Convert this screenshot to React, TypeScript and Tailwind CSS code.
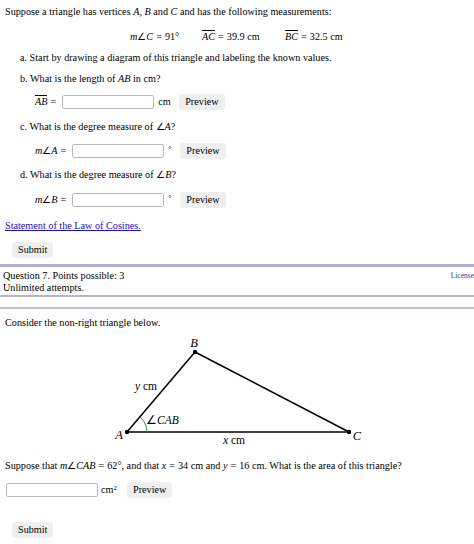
import React from 'react';

function M({ children }: { children: React.ReactNode }) {
  return <span className="italic">{children}</span>;
}

function Bar({ children }: { children: React.ReactNode }) {
  return <span className="inline-block border-t border-black pt-[1px] leading-[1] italic">{children}</span>;
}

function Eq() {
  return <span className="mx-[3px]">=</span>;
}

function Input() {
  return <span className="inline-block h-[14px] w-[92px] rounded-[2px] border border-[#b8b8b8] bg-white" />;
}

function Btn({ children }: { children: React.ReactNode }) {
  return (
    <span className="inline-flex h-[16px] items-center rounded-[3px] bg-[#efefef] px-[6px] text-[10.2px]">
      {children}
    </span>
  );
}

function AnswerRow({ label, unit, unitW }: { label: React.ReactNode; unit: React.ReactNode; unitW: string }) {
  return (
    <div className="flex h-[17px] items-center pl-[30px]">
      <span className="mr-[3px]">{label}</span>
      <Input />
      <span className={`pl-[4px] ${unitW}`}>{unit}</span>
      <Btn>Preview</Btn>
    </div>
  );
}

export default function App() {
  return (
    <div className="h-[544px] w-[474px] overflow-hidden bg-white text-[10.2px] leading-[14px] text-black [font-family:'Liberation_Serif','Times_New_Roman',serif]">
      <div className="px-[5px] pt-[5px]">
        <p>
          Suppose a triangle has vertices <M>A</M>, <M>B</M> and <M>C</M> and has the following measurements:
        </p>
        <div className="mt-[11px] flex pl-[125px]">
          <span className="w-[72px]">
            <M>m</M>∠<M>C</M>
            <Eq />
            91°
          </span>
          <span className="w-[83px]">
            <Bar>AC</Bar>
            <Eq />
            39.9 cm
          </span>
          <span>
            <Bar>BC</Bar>
            <Eq />
            32.5 cm
          </span>
        </div>
        <div className="pl-[15px]">
          <p className="mt-[7px]">a. Start by drawing a diagram of this triangle and labeling the known values.</p>
          <p className="mt-[7px]">
            b. What is the length of <M>AB</M> in cm?
          </p>
        </div>
        <div className="mt-[7.5px]">
          <AnswerRow
            label={
              <>
                <Bar>AB</Bar>
                <Eq />
              </>
            }
            unit="cm"
            unitW="w-[25px]"
          />
        </div>
        <p className="mt-[9.5px] pl-[15px]">
          c. What is the degree measure of ∠<M>A</M>?
        </p>
        <div className="mt-[8.5px]">
          <AnswerRow
            label={
              <>
                <M>m</M>∠<M>A</M>
                <Eq />
              </>
            }
            unit={<span className="relative top-[-2px] text-[8px]">°</span>}
            unitW="w-[16px]"
          />
        </div>
        <p className="mt-[8.5px] pl-[15px]">
          d. What is the degree measure of ∠<M>B</M>?
        </p>
        <div className="mt-[9.5px]">
          <AnswerRow
            label={
              <>
                <M>m</M>∠<M>B</M>
                <Eq />
              </>
            }
            unit={<span className="relative top-[-2px] text-[8px]">°</span>}
            unitW="w-[16px]"
          />
        </div>
        <p className="mt-[10.5px]">
          <a className="text-[#1a0dcc] underline">Statement of the Law of Cosines.</a>
        </p>
        <div className="mt-[8.5px] flex pl-[7px]">
          <Btn>Submit</Btn>
        </div>
      </div>

      <div className="mt-[6.5px] border-t-[3px] border-[#b0b0d4]" />
      <div className="flex justify-between pl-[3px] pt-[3px] pb-[1px] leading-[12px]">
        <div>
          <p>Question 7. Points possible: 3</p>
          <p>Unlimited attempts.</p>
        </div>
        <a className="pt-[1px] text-[7.5px] leading-[9px] text-[#3333aa]">License</a>
      </div>
      <div className="border-t-2 border-[#b4b4c8]" />
      <div className="mt-[10px] border-t-2 border-[#c0c0d0]" />

      <div className="px-[5px] pt-[7px]">
        <p>Consider the non-right triangle below.</p>
        <svg width="464" height="125" viewBox="0 0 464 125" className="block">
          <g transform="translate(-5,-331)">
            <line x1="127" y1="433" x2="195" y2="353" stroke="#000" strokeWidth="1.5" />
            <line x1="195" y1="353" x2="349" y2="433" stroke="#000" strokeWidth="1.5" />
            <line x1="127" y1="433" x2="349" y2="433" stroke="#000" strokeWidth="1.5" />
            <path d="M 147 433 A 20 20 0 0 0 140 418" fill="none" stroke="#2e8b3a" strokeWidth="1" />
            <circle cx="127" cy="433" r="2.2" />
            <circle cx="195" cy="353" r="2.2" />
            <circle cx="349" cy="433" r="2.2" />
            <text x="194" y="348" fontSize="12.5" fontStyle="italic" textAnchor="middle" fontFamily="Liberation Serif">
              B
            </text>
            <text x="119" y="440" fontSize="12.5" fontStyle="italic" textAnchor="middle" fontFamily="Liberation Serif">
              A
            </text>
            <text x="357" y="441" fontSize="12.5" fontStyle="italic" textAnchor="middle" fontFamily="Liberation Serif">
              C
            </text>
            <text x="146" y="391" fontSize="11.5" textAnchor="middle" fontFamily="Liberation Serif">
              <tspan fontStyle="italic">y</tspan> cm
            </text>
            <text x="146" y="425" fontSize="11.5" fontFamily="Liberation Serif">
              ∠<tspan fontStyle="italic">CAB</tspan>
            </text>
            <text x="234" y="445" fontSize="11.5" textAnchor="middle" fontFamily="Liberation Serif">
              <tspan fontStyle="italic">x</tspan> cm
            </text>
          </g>
        </svg>
        <p className="mt-[4px]">
          Suppose that <M>m</M>∠<M>CAB</M>
          <Eq />
          62°, and that <M>x</M>
          <Eq />
          34 cm and <M>y</M>
          <Eq />
          16 cm. What is the area of this triangle?
        </p>
        <div className="mt-[8.5px] flex h-[17px] items-center pl-[1px]">
          <Input />
          <span className="w-[29px] pl-[3px]">
            cm<sup className="text-[7px]">2</sup>
          </span>
          <Btn>Preview</Btn>
        </div>
        <div className="mt-[23px] flex pl-[7px]">
          <Btn>Submit</Btn>
        </div>
      </div>
    </div>
  );
}
